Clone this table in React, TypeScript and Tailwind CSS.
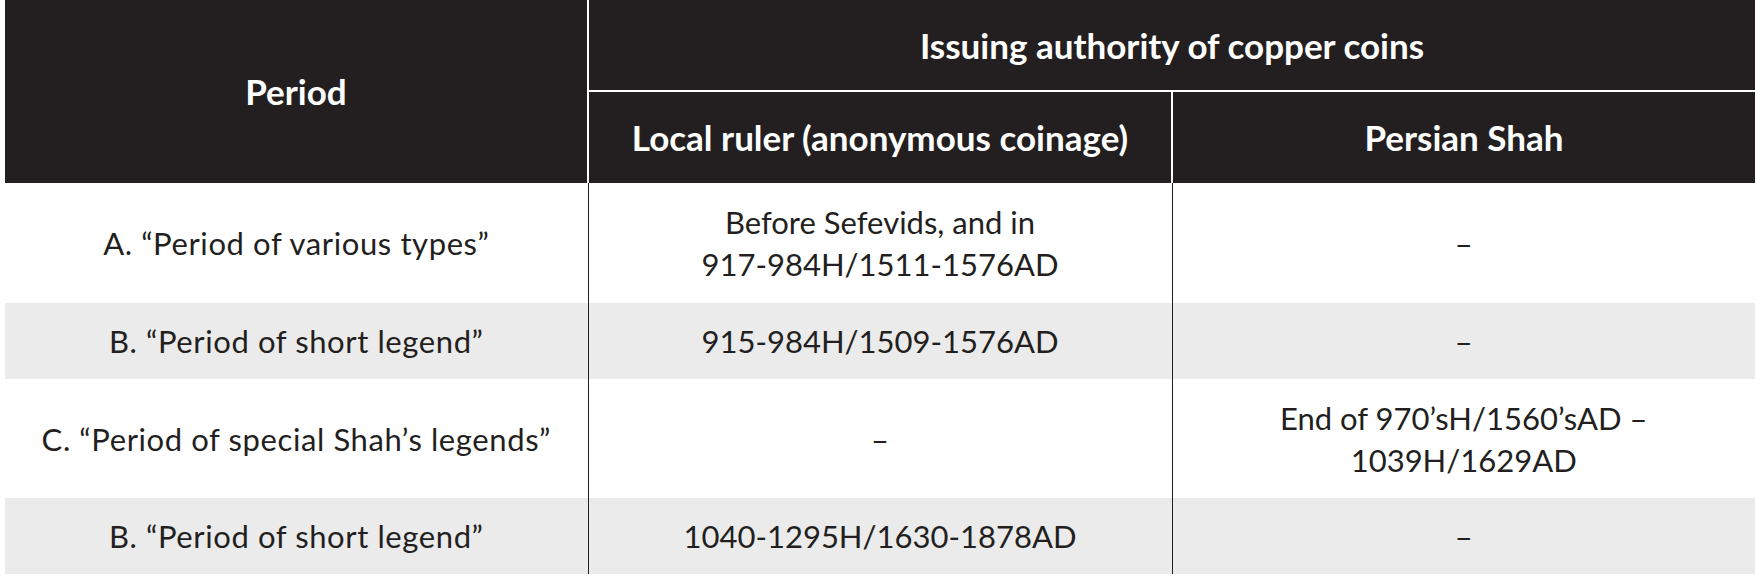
const font = { fontFamily: 'Lato, "Open Sans", sans-serif' }

type Row = {
  period: string
  local: string[]
  shah: string[]
  height: string
  shade: boolean
}

const rows: Row[] = [
  {
    period: 'A. “Period of various types”',
    local: ['Before Sefevids, and in', '917-984H/1511-1576AD'],
    shah: ['–'],
    height: 'h-[120px]',
    shade: false,
  },
  {
    period: 'B. “Period of short legend”',
    local: ['915-984H/1509-1576AD'],
    shah: ['–'],
    height: 'h-[76px]',
    shade: true,
  },
  {
    period: 'C. “Period of special Shah’s legends”',
    local: ['–'],
    shah: ['End of 970’sH/1560’sAD –', '1039H/1629AD'],
    height: 'h-[119px]',
    shade: false,
  },
  {
    period: 'B. “Period of short legend”',
    local: ['1040-1295H/1630-1878AD'],
    shah: ['–'],
    height: 'h-[76px]',
    shade: true,
  },
]

function Lines({ lines }: { lines: string[] }) {
  return (
    <>
      {lines.map((line, i) => (
        <div key={i}>{line}</div>
      ))}
    </>
  )
}

export default function App() {
  return (
    <div className="w-[1756px] h-[588px] bg-white pl-[5px] overflow-hidden" style={font}>
      <table className="w-[1750px] table-fixed border-collapse">
        <colgroup>
          <col className="w-[583px]" />
          <col className="w-[584px]" />
          <col className="w-[583px]" />
        </colgroup>
        <thead className="bg-[#231f20] text-white text-[35px] font-bold">
          <tr className="h-[91px]">
            <th rowSpan={2} className="p-0 font-bold text-center align-middle">
              Period
            </th>
            <th
              colSpan={2}
              className="p-0 font-bold text-center align-middle border-l-2 border-b-2 border-white"
            >
              Issuing authority of copper coins
            </th>
          </tr>
          <tr className="h-[92px]">
            <th className="p-0 font-bold text-center align-middle border-l-2 border-white">
              Local ruler (anonymous coinage)
            </th>
            <th className="p-0 font-bold text-center align-middle border-l-2 border-white">
              Persian Shah
            </th>
          </tr>
        </thead>
        <tbody className="text-[31px] leading-[42px] text-[#231f20]">
          {rows.map((row, i) => (
            <tr key={i} className={`${row.height} ${row.shade ? 'bg-[#ebebeb]' : 'bg-white'}`}>
              <td className="p-0 text-center align-middle tracking-[0.6px] border-r border-[#231f20]">
                {row.period}
              </td>
              <td className="p-0 text-center align-middle border-r border-[#231f20]">
                <Lines lines={row.local} />
              </td>
              <td className="p-0 text-center align-middle">
                <Lines lines={row.shah} />
              </td>
            </tr>
          ))}
        </tbody>
      </table>
    </div>
  )
}
